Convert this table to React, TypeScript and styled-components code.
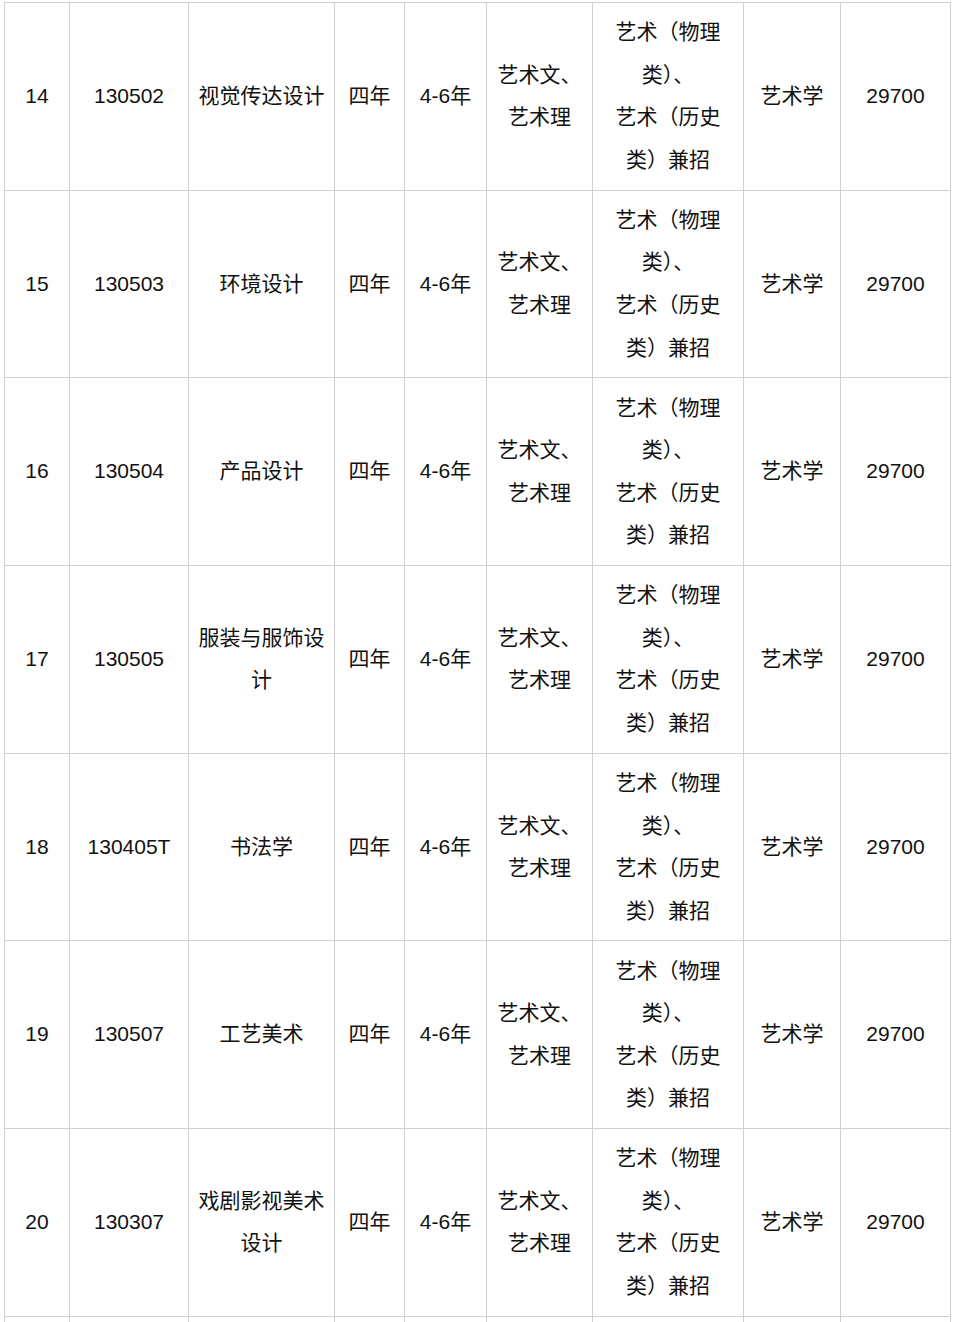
import { createGlobalStyle } from 'styled-components';
import styled from 'styled-components';

const GlobalStyle = createGlobalStyle`
	html, body {
		margin: 0;
		padding: 0;
		background: #fff;
	}
	body {
		font-family: 'Liberation Sans', 'Noto Sans CJK SC', sans-serif;
		color: #111;
	}
`;

interface Major {
	no: string;
	code: string;
	name: string;
	years: string;
	span: string;
	subjects: string;
	types: string[];
	degree: string;
	fee: string;
}

const ART_TYPES = ['艺术（物理类）、', '艺术（历史类）兼招'];

const majors: Major[] = [
	{ no: '14', code: '130502', name: '视觉传达设计' },
	{ no: '15', code: '130503', name: '环境设计' },
	{ no: '16', code: '130504', name: '产品设计' },
	{ no: '17', code: '130505', name: '服装与服饰设计' },
	{ no: '18', code: '130405T', name: '书法学' },
	{ no: '19', code: '130507', name: '工艺美术' },
	{ no: '20', code: '130307', name: '戏剧影视美术设计' },
].map((m) => ({
	...m,
	years: '四年',
	span: '4-6年',
	subjects: '艺术文、艺术理',
	types: ART_TYPES,
	degree: '艺术学',
	fee: '29700',
}));

const COL_WIDTHS = [65, 119, 146, 70, 82, 106, 151, 97, 110];

function App() {
	return (
		<Page>
			<GlobalStyle />
			<Table>
				<colgroup>
					{COL_WIDTHS.map((w, i) => (
						<col key={i} style={{ width: w }} />
					))}
				</colgroup>
				<tbody>
					{majors.map((m) => (
						<Row key={m.no}>
							<Cell>{m.no}</Cell>
							<Cell>{m.code}</Cell>
							<Cell>{m.name}</Cell>
							<Cell>{m.years}</Cell>
							<Cell>{m.span}</Cell>
							<Cell>{m.subjects}</Cell>
							<Cell>
								{m.types.map((t) => (
									<Para key={t}>{t}</Para>
								))}
							</Cell>
							<Cell>{m.degree}</Cell>
							<Cell>{m.fee}</Cell>
						</Row>
					))}
					{/* 下一行只露出上边框 */}
					<Row>
						{COL_WIDTHS.map((_, i) => (
							<Cell key={i} />
						))}
					</Row>
				</tbody>
			</Table>
		</Page>
	);
}

export default App;

const Page = styled.div`
	padding: 2px 4px 0 4px;
	height: 1322px;
	overflow: hidden;
	box-sizing: border-box;
`;

const Table = styled.table`
	width: 946px;
	table-layout: fixed;
	border-collapse: collapse;
`;

const Row = styled.tr`
	height: 187.7px;
`;

const Cell = styled.td`
	border: 1px solid #cfcfcf;
	padding: 7px 8px;
	text-align: center;
	vertical-align: middle;
	font-size: 21px;
	line-height: 42.6px;
	word-break: normal;
	overflow-wrap: break-word;
`;

const Para = styled.div`
	margin: 0;
`;
